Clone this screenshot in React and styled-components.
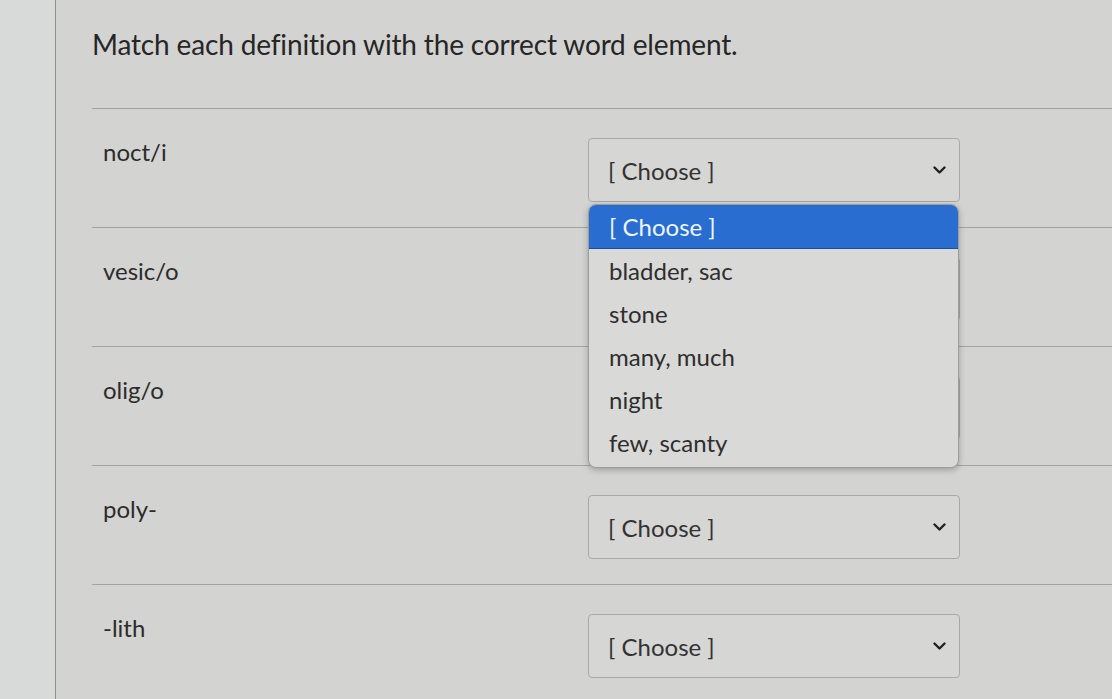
import React from "react";
import styled, { createGlobalStyle } from "styled-components";

const GlobalStyle = createGlobalStyle`
  html, body {
    margin: 0;
    padding: 0;
    background: #d3d3d2;
    font-family: Lato, "Open Sans", "Liberation Sans", sans-serif;
    color: #2e2e2e;
  }
`;

const Page = styled.div`
  display: flex;
  min-height: 699px;
  width: 1112px;
  overflow: hidden;
`;

const Strip = styled.div`
  width: 55px;
  flex: none;
  background: #d8d9d9;
  border-right: 1px solid #8f8f8f;
`;

const Panel = styled.div`
  flex: 1;
  padding: 26px 0 0 36px;
`;

const Title = styled.h1`
  margin: 0;
  font-size: 28px;
  font-weight: 400;
  line-height: 36px;
  color: #262626;
  letter-spacing: -0.15px;
`;

const Question = styled.div`
  margin-top: 46px;
  border-top: 1px solid #a3a3a3;
`;

const Row = styled.div`
  display: grid;
  grid-template-columns: 496px 372px;
  height: 119px;
  border-bottom: 1px solid #a3a3a3;
  box-sizing: border-box;
`;

const Label = styled.div`
  padding: 29px 0 0 11px;
  font-size: 24px;
  line-height: 28px;
  color: #2c2c2c;
`;

const SelectWrap = styled.div`
  position: relative;
  padding-top: 29px;
`;

const Select = styled.div`
  height: 64px;
  box-sizing: border-box;
  border: 1px solid #a9a9a9;
  border-radius: 4px;
  display: flex;
  align-items: center;
  justify-content: space-between;
  padding: 0 13px 0 19px;
  font-size: 24px;
  color: #333;
  background: #d6d6d5;

  & > * {
    visibility: ${(p) => (p.$covered ? "hidden" : "visible")};
  }
`;

const Menu = styled.ul`
  position: absolute;
  top: 95px;
  left: 0;
  width: 369px;
  margin: 0;
  padding: 0 0 3px;
  list-style: none;
  background: #d9d9d8;
  border: 1px solid #9c9c9c;
  border-radius: 8px;
  box-shadow: 0 2px 6px rgba(0, 0, 0, 0.25);
  overflow: hidden;
  z-index: 2;
`;

const Option = styled.li`
  height: 43px;
  display: flex;
  align-items: center;
  padding-left: 20px;
  font-size: 24px;
  color: ${(p) => (p.$active ? "#eef7ff" : "#2e2e2e")};
  background: ${(p) => (p.$active ? "#2a6dd0" : "transparent")};
  border-bottom: ${(p) => (p.$active ? "1px solid #1d4f9c" : "none")};
`;

const Chevron = () => (
  <svg width="13" height="9" viewBox="0 0 13 9">
    <polyline
      points="1.5,1.5 6.5,6.5 11.5,1.5"
      fill="none"
      stroke="#222"
      strokeWidth="2.4"
      strokeLinecap="round"
      strokeLinejoin="round"
    />
  </svg>
);

const rows = ["noct/i", "vesic/o", "olig/o", "poly-", "-lith"];
const options = ["[ Choose ]", "bladder, sac", "stone", "many, much", "night", "few, scanty"];
const openRow = 0;

export default function App() {
  return (
    <Page>
      <GlobalStyle />
      <Strip />
      <Panel>
        <Title>Match each definition with the correct word element.</Title>
        <Question>
          {rows.map((word, i) => (
            <Row key={word}>
              <Label>{word}</Label>
              <SelectWrap>
                <Select $covered={i > openRow && i <= openRow + 2}>
                  <span>[ Choose ]</span>
                  <Chevron />
                </Select>
                {i === openRow && (
                  <Menu>
                    {options.map((o, j) => (
                      <Option key={o} $active={j === 0}>
                        {o}
                      </Option>
                    ))}
                  </Menu>
                )}
              </SelectWrap>
            </Row>
          ))}
        </Question>
      </Panel>
    </Page>
  );
}
